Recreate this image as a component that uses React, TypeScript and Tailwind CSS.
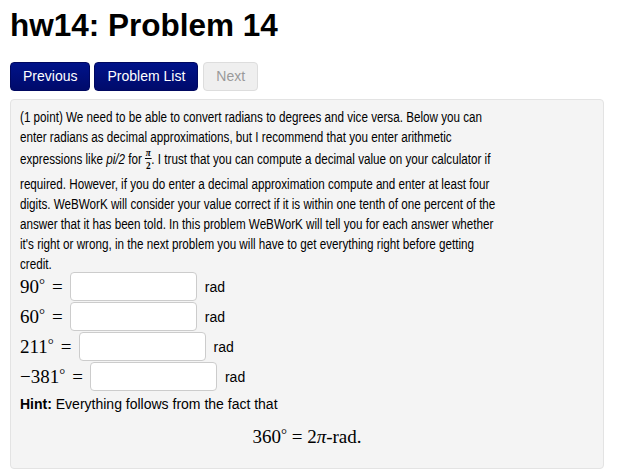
import React from 'react';

const mathFont = { fontFamily: '"Liberation Serif", "DejaVu Serif", serif' };

function Deg({ value }: { value: string }) {
  return (
    <span className="text-[19px] whitespace-nowrap leading-none" style={mathFont}>
      {value}
      <span className="text-[15px] relative -top-[4px]">°</span>
      <span className="mx-[7px]">=</span>
    </span>
  );
}

function AnswerRow({ value }: { value: string }) {
  return (
    <div className="flex items-center h-[30px]">
      <Deg value={value} />
      <input
        type="text"
        className="w-[127px] h-[29px] bg-white border border-[#cccccc] rounded-[4px] outline-none"
      />
      <span className="ml-[8px] text-[14px]">rad</span>
    </div>
  );
}

export default function App() {
  return (
    <div className="w-[628px] h-[472px] bg-white px-[10px] text-black overflow-hidden" style={{ fontFamily: '"Liberation Sans", Arial, sans-serif' }}>
      <h1 className="text-[31.5px] font-bold leading-none pt-[10px]">hw14: Problem 14</h1>

      <div className="flex gap-[4px] mt-[20px]">
        <button className="h-[29px] px-[12px] text-[14px] text-white rounded-[4px] bg-gradient-to-b from-[#00138a] to-[#000a6b] border border-[#000860]">
          Previous
        </button>
        <button className="h-[29px] px-[12px] text-[14px] text-white rounded-[4px] bg-gradient-to-b from-[#00138a] to-[#000a6b] border border-[#000860]">
          Problem List
        </button>
        <button className="h-[29px] px-[12px] ml-[1px] text-[14px] text-[#9a9a9a] rounded-[4px] bg-[#efefef] border border-[#dddddd]">
          Next
        </button>
      </div>

      <div className="mt-[8px] w-[594px] h-[370px] bg-[#f4f4f4] border border-[#e3e3e3] rounded-[4px] px-[9px] pt-[7px] text-[14px] leading-[20px]">
        {/* problem text is set in a condensed face in the original */}
        <p className="w-[578px] origin-left scale-x-[0.833]">
          (1 point) We need to be able to convert radians to degrees and vice versa. Below you can enter radians as decimal approximations, but I recommend that you enter arithmetic expressions like <i>pi/2</i> for{' '}
          <span className="inline-flex flex-col items-center align-middle leading-none text-[11px] font-bold mb-[3px]" style={mathFont}>
            <span className="italic">π</span>
            <span className="border-t border-black px-[1px] pt-[1px]">2</span>
          </span>
          . I trust that you can compute a decimal value on your calculator if required. However, if you do enter a decimal approximation compute and enter at least four digits. WeBWorK will consider your value correct if it is within one tenth of one percent of the answer that it has been told. In this problem WeBWorK will tell you for each answer whether it's right or wrong, in the next problem you will have to get everything right before getting credit.
        </p>

        <div className="mt-[-2px]">
          <AnswerRow value="90" />
          <AnswerRow value="60" />
          <AnswerRow value="211" />
          <AnswerRow value="−381" />
        </div>

        <p className="mt-[2px]">
          <b>Hint:</b> Everything follows from the fact that
        </p>
        <p className="text-center text-[19px] leading-[24px] mt-[11px]" style={mathFont}>
          360<span className="text-[15px] relative -top-[4px]">°</span> = 2<i>π</i>-rad.
        </p>
      </div>
    </div>
  );
}
